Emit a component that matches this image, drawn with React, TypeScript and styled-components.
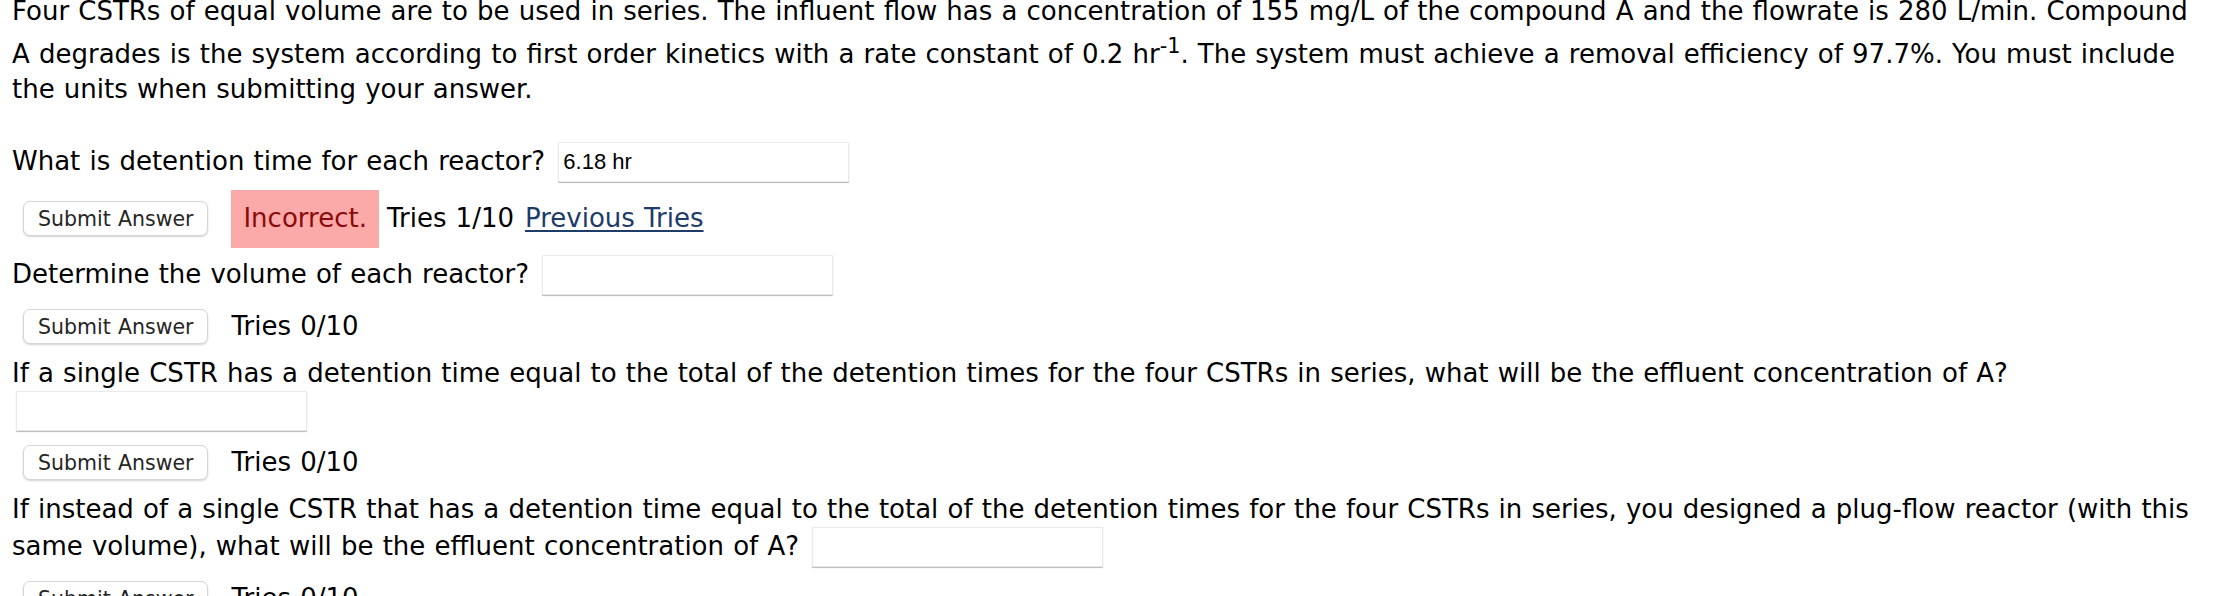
import React from "react";
import styled, { createGlobalStyle } from "styled-components";

const GlobalStyle = createGlobalStyle`
  html, body {
    margin: 0;
    padding: 0;
    background: #ffffff;
  }
  body {
    font-family: "DejaVu Sans", Verdana, sans-serif;
    color: #000000;
    overflow: hidden;
  }
`;

const Page = styled.div`
  padding: 0 12px;
  margin-top: -6px;
  font-family: "DejaVu Sans", Verdana, sans-serif;
  font-size: 26px;
  line-height: 35px;
  word-spacing: 0.9px;
  color: #000;
`;

const Problem = styled.div`
  margin: 0;
`;

const Sup = styled.sup`
  font-size: 0.8em;
  vertical-align: super;
`;

const Question = styled.div<{ $gap: number }>`
  margin-top: ${(p) => p.$gap}px;
  line-height: 36px;
`;

const AnswerInput = styled.input`
  display: inline-block;
  box-sizing: border-box;
  width: 291px;
  height: 40px;
  margin: 0 0 0 4px;
  padding: 0 4px;
  vertical-align: middle;
  border: 1px solid #e9e9e9;
  border-radius: 1px;
  box-shadow: 0 1px 1px rgba(0, 0, 0, 0.28);
  background: #ffffff;
  font-family: "Liberation Sans", Arial, sans-serif;
  font-size: 22px;
  word-spacing: 0;
  color: #000;
  outline: none;
`;

const StatusRow = styled.div`
  display: flex;
  align-items: center;
  min-height: 48px;
  margin-top: 8px;
`;

const SubmitButton = styled.button`
  box-sizing: border-box;
  height: 35px;
  margin: 0 23px 0 11px;
  padding: 0 14px;
  background: #ffffff;
  border: 1px solid #d6d6d6;
  border-radius: 7px;
  box-shadow: 0 1px 2px rgba(0, 0, 0, 0.18);
  font-family: "DejaVu Sans", Verdana, sans-serif;
  font-size: 20.5px;
  word-spacing: 0.7px;
  color: #262626;
  white-space: nowrap;
  cursor: pointer;
`;

const Verdict = styled.span`
  display: inline-flex;
  align-items: center;
  height: 58px;
  padding: 0 12px;
  margin-right: 8px;
  background: #fba9a9;
  color: #8a0a0a;
`;

const Tries = styled.span`
  white-space: nowrap;
`;

const PrevLink = styled.a`
  color: #1d3c6a;
  text-decoration: underline;
  text-underline-offset: 3px;
  margin-left: 11px;
  cursor: pointer;
`;

export default function App() {
  return (
    <>
      <GlobalStyle />
      <Page>
        <Problem>
          Four CSTRs of equal volume are to be used in series. The influent flow has a
          concentration of 155 mg/L of the compound A and the flowrate is 280 L/min.
          Compound A degrades is the system according to first order kinetics with a rate
          constant of 0.2 hr<Sup>-1</Sup>. The system must achieve a removal efficiency of
          97.7%. You must include the units when submitting your answer.
        </Problem>

        <Question $gap={35}>
          What is detention time for each reactor? <AnswerInput defaultValue="6.18 hr" />
        </Question>
        <StatusRow>
          <SubmitButton>Submit Answer</SubmitButton>
          <Verdict>Incorrect.</Verdict>
          <Tries>Tries 1/10</Tries>
          <PrevLink>Previous Tries</PrevLink>
        </StatusRow>

        <Question $gap={7}>
          Determine the volume of each reactor? <AnswerInput />
        </Question>
        <StatusRow>
          <SubmitButton>Submit Answer</SubmitButton>
          <Tries>Tries 0/10</Tries>
        </StatusRow>

        <Question $gap={4}>
          If a single CSTR has a detention time equal to the total of the detention times for
          the four CSTRs in series, what will be the effluent concentration of A?{" "}
          <AnswerInput />
        </Question>
        <StatusRow>
          <SubmitButton>Submit Answer</SubmitButton>
          <Tries>Tries 0/10</Tries>
        </StatusRow>

        <Question $gap={4}>
          If instead of a single CSTR that has a detention time equal to the total of the
          detention times for the four CSTRs in series, you designed a plug-flow reactor (with
          this same volume), what will be the effluent concentration of A? <AnswerInput />
        </Question>
        <StatusRow>
          <SubmitButton>Submit Answer</SubmitButton>
          <Tries>Tries 0/10</Tries>
        </StatusRow>
      </Page>
    </>
  );
}
